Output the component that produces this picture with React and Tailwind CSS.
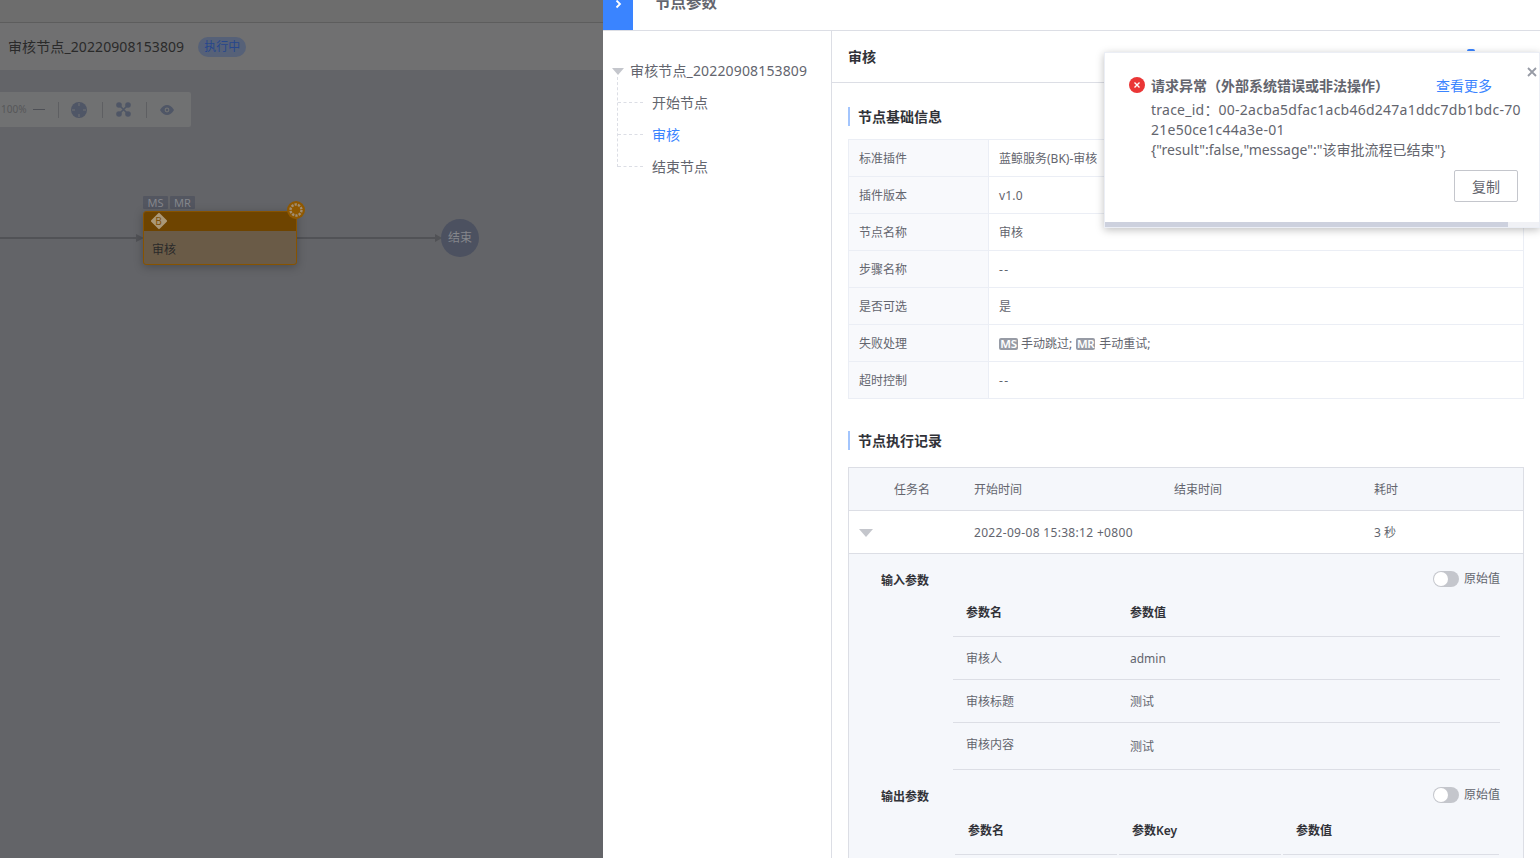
const font = { fontFamily: '"Noto Sans","Noto Sans CJK SC",sans-serif' };

function Section({ children }) {
  return (
    <div className="h-[19px] border-l-2 border-[#a3c5fd] pl-2 text-[14px] leading-[19px] font-semibold text-[#313238]">{children}</div>
  );
}

function InfoRow({ label, children }) {
  return (
    <div className="flex h-[37px] last:h-[36px] border-b border-[#ebeef5] last:border-b-0 items-center text-[12px] text-[#63656e]">
      <div className="w-[140px] h-full shrink-0 bg-[#f8f9fc] border-r border-[#ebeef5] pl-[10px] pt-[2px] flex items-center">{label}</div>
      <div className="pl-[10px] pt-[2px] flex items-center gap-[3px]">{children}</div>
    </div>
  );
}

function Tag({ children, className = "" }) {
  return <span className={`inline-flex items-center justify-center h-[12px] w-[19px] rounded-[2px] bg-[#979ba5] text-white text-[11.500px] font-semibold tracking-[-0.3px] leading-none ${className}`}>{children}</span>;
}

function Toggle() {
  return (
    <div className="flex items-center gap-[5px] text-[12px] text-[#63656e]">
      <div className="w-[26px] h-[16px] rounded-full bg-[#c4c6cc] p-[1px]">
        <div className="w-[14px] h-[14px] rounded-full bg-white" />
      </div>
      <span>原始值</span>
    </div>
  );
}

function ParamRow({ a, b, h, ca = "pt-[2px]", cb = "pt-[2px]" }) {
  return (
    <div className={`flex items-center border-b border-[#dcdee5] text-[12px] text-[#63656e] ${h}`}>
      <div className={`w-[177px] pl-[13px] shrink-0 ${ca}`}>{a}</div>
      <div className={cb}>{b}</div>
    </div>
  );
}

function Canvas() {
  return (
    <div className="relative flex-1 bg-[#636468] overflow-hidden">
      <div className="absolute left-0 top-[22px] w-[191px] h-[35px] bg-[#707172] rounded-r-[2px] flex items-center text-[#54565c]">
        <span className="absolute left-[1px] text-[10px] text-[#565759]">100%</span>
        <div className="absolute left-[33px] w-[12px] h-[1px] bg-[#4e5056]" />
        <div className="absolute left-[58px] w-px h-[16px] bg-[#5e5f62]" />
        <svg className="absolute left-[71px]" width="16" height="16" viewBox="0 0 16 16">
          <circle cx="8" cy="8" r="8" fill="#4f5666" />
          <path d="M8 1v3M8 12v3M1 8h3M12 8h3" stroke="#707172" strokeWidth="1" />
        </svg>
        <div className="absolute left-[102px] w-px h-[16px] bg-[#5e5f62]" />
        <svg className="absolute left-[116px]" width="15" height="15" viewBox="0 0 15 15">
          <g fill="#4f5666">
            <circle cx="3" cy="3" r="2.8" /><circle cx="12" cy="3" r="2.8" />
            <circle cx="3" cy="12" r="2.8" /><circle cx="12" cy="12" r="2.8" />
          </g>
          <path d="M3 3l9 9M12 3l-9 9" stroke="#4f5666" strokeWidth="1.6" />
        </svg>
        <div className="absolute left-[146px] w-px h-[16px] bg-[#5e5f62]" />
        <svg className="absolute left-[160px]" width="14" height="10" viewBox="0 0 14 10">
          <path d="M0 5C2 1.5 4.5 0 7 0s5 1.500 7 5c-2 3.500-4.500 5-7 5S2 8.500 0 5z" fill="#4f5666" />
          <circle cx="7" cy="5" r="2.400" fill="#707172" />
          <circle cx="7" cy="5" r="1.200" fill="#4f5666" />
        </svg>
      </div>

      <div className="absolute left-0 top-[167px] w-[138px] h-[2px] bg-[#515256]" />
      <div className="absolute left-[136px] top-[164px] w-0 h-0 border-y-[4px] border-y-transparent border-l-[8px] border-l-[#515256]" />
      <div className="absolute left-[297px] top-[167px] w-[140px] h-[2px] bg-[#515256]" />
      <div className="absolute left-[435px] top-[164px] w-0 h-0 border-y-[4px] border-y-transparent border-l-[7px] border-l-[#515256]" />

      <div className="absolute left-[143px] top-[126px] flex gap-[2px]">
        <div className="w-[25px] h-[13px] rounded-[1px] bg-[#535660] text-[#85878c] text-[11px] leading-[14px] text-center">MS</div>
        <div className="w-[25px] h-[13px] rounded-[1px] bg-[#535660] text-[#85878c] text-[11px] leading-[14px] text-center">MR</div>
      </div>

      <div className="absolute left-[143px] top-[141px] w-[154px] h-[54px] rounded-[3px] border border-[#875300] bg-[#6a5b47] shadow-[0_2px_10px_rgba(0,0,0,0.25)] overflow-hidden">
        <div className="h-[20px] bg-[#6e4400] -mx-px -mt-px relative">
          <div className="absolute left-[7px] top-[1px] w-[17px] h-[17px] flex items-center justify-center">
            <div className="absolute w-[12px] h-[12px] rotate-45 rounded-[1px] bg-[#ab9877]" />
            <span className="relative text-[10px] leading-none text-[#7d5008]">B</span>
          </div>
        </div>
        <div className="pl-[8px] pt-[10px] text-[12px] leading-[18px] text-[#2a2a2a]">审核</div>
      </div>

      <svg className="absolute left-[287px] top-[131px]" width="18" height="18" viewBox="0 0 18 18">
        <circle cx="9" cy="9" r="9" fill="#8f5800" />
        <circle cx="9" cy="9" r="5.500" fill="none" stroke="#a08d72" strokeWidth="2.400" strokeDasharray="2.300 1.100" />
      </svg>

      <div className="absolute left-[441px] top-[149px] w-[38px] h-[38px] rounded-full bg-[#4c5160] text-[#85878c] text-[12px] flex items-center justify-center">结束</div>
    </div>
  );
}

export default function App() {
  return (
    <div className="relative flex w-[1540px] h-[858px] overflow-hidden bg-white" style={font}>
      <div className="w-[603px] shrink-0 flex flex-col h-full">
        <div className="h-[23px] bg-[#6d6d6d] border-b border-[#5d5d5d]" />
        <div className="h-[47px] bg-[#707071] flex items-center pl-[8px] gap-[14px]">
          <span className="text-[14px] text-[#2a2a2a] tracking-[0.1px]">审核节点_20220908153809</span>
          <span className="h-[20px] w-[48px] rounded-full bg-[#566178] text-[#26478c] text-[12px] flex items-center justify-center">执行中</span>
        </div>
        <Canvas />
      </div>

      <div className="flex-1 flex flex-col h-full min-w-0">
        <div className="h-[31px] shrink-0 border-b border-[#dcdee5] flex items-start overflow-hidden">
          <div className="w-[30px] h-[30px] bg-[#3a84ff] shrink-0 flex justify-center">
            <svg width="10" height="10" viewBox="0 0 10 10"><path d="M3.500 0.500L7 4 3.500 7.500" fill="none" stroke="#fff" strokeWidth="1.800" /></svg>
          </div>
          <div className="ml-[22px] -mt-[10px] text-[15.500px] leading-[24px] font-semibold text-[#63656e]">节点参数</div>
        </div>

        <div className="flex flex-1 min-h-0">
          <div className="w-[229px] shrink-0 border-r border-[#dcdee5] pt-[23px] text-[14px] relative">
            <div className="flex items-center h-[32px] pl-[9px]">
              <div className="w-0 h-0 border-x-[6px] border-x-transparent border-t-[7px] border-t-[#c4c6cc] mr-[6px] mt-[2px]" />
              <span className="text-[#63656e] tracking-[0.15px]">审核节点_20220908153809</span>
            </div>
            <div className="ml-[14px] w-[1px] border-l border-dashed border-[#dcdee5] h-[90px] absolute top-[46px]" />
            {[
              ["开始节点", "text-[#63656e]"],
              ["审核", "text-[#3a84ff]"],
              ["结束节点", "text-[#63656e]"],
            ].map(([t, c]) => (
              <div key={t} className="flex items-center h-[32px] pl-[15px]">
                <div className="w-[25px] border-t border-dashed border-[#dcdee5] mr-[9px]" />
                <span className={c}>{t}</span>
              </div>
            ))}
          </div>

          <div className="flex-1 min-w-0 overflow-hidden">
            <div className="h-[52px] border-b border-[#dcdee5] pl-[16px] flex items-center text-[14px] font-semibold text-[#313238] relative">
              审核
              <div className="absolute left-[635px] top-[18px] w-[8px] h-[2px] rounded-t-full bg-[#3a84ff]" />
            </div>
            <div className="pl-[16px] pr-[16px] pt-[24px]">
              <Section>节点基础信息</Section>
              <div className="mt-[13px] border border-[#ebeef5]">
                <InfoRow label="标准插件">蓝鲸服务(BK)-审核</InfoRow>
                <InfoRow label="插件版本"><span className="tracking-[0.2px]">v1.0</span></InfoRow>
                <InfoRow label="节点名称">审核</InfoRow>
                <InfoRow label="步骤名称"><span className="tracking-[1.500px]">--</span></InfoRow>
                <InfoRow label="是否可选">是</InfoRow>
                <InfoRow label="失败处理">
                  <Tag>MS</Tag><span>手动跳过;</span><Tag className="ml-px mr-px">MR</Tag><span>手动重试;</span>
                </InfoRow>
                <InfoRow label="超时控制"><span className="tracking-[1.500px]">--</span></InfoRow>
              </div>

              <div className="mt-[32px]"><Section>节点执行记录</Section></div>

              <div className="mt-[17px] border border-[#dcdee5] border-b-0 h-[500px]">
                <div className="flex items-center h-[43px] bg-[#f5f7fb] border-b border-[#dcdee5] text-[12px] text-[#63656e] pt-[2px]">
                  <div className="w-[125px] pl-[45px]">任务名</div>
                  <div className="w-[200px]">开始时间</div>
                  <div className="w-[200px]">结束时间</div>
                  <div>耗时</div>
                </div>
                <div className="flex items-center h-[43px] border-b border-[#dcdee5] text-[12px] text-[#63656e] pt-[2px]">
                  <div className="w-[125px] pl-[10px]">
                    <div className="w-0 h-0 border-x-[7px] border-x-transparent border-t-[8px] border-t-[#c4c6cc]" />
                  </div>
                  <div className="w-[400px] tracking-[0.32px]">2022-09-08 15:38:12 +0800</div>
                  <div>3 秒</div>
                </div>
                <div className="bg-[#f5f7fb] h-[420px] pl-[32px] pr-[23px] pt-[16px]">
                  <div className="flex justify-between items-start h-[21px]">
                    <span className="text-[12px] font-semibold text-[#313238] leading-[22px]">输入参数</span>
                    <Toggle />
                  </div>
                  <div className="ml-[72px]">
                    <div className="flex items-center h-[46px] border-b border-[#dcdee5] text-[12px] font-semibold text-[#313238]">
                      <div className="w-[177px] pl-[13px] shrink-0 -mt-[2px]">参数名</div>
                      <div className="-mt-[2px]">参数值</div>
                    </div>
                    <ParamRow a="审核人" b="admin" h="h-[43px]" />
                    <ParamRow a="审核标题" b="测试" h="h-[43px]" />
                    <ParamRow a="审核内容" b="测试" h="h-[47px]" ca="-mt-[2px]" cb="pt-[2px]" />
                  </div>
                  <div className="flex justify-between items-start h-[21px] mt-[16px]">
                    <span className="text-[12px] font-semibold text-[#313238] leading-[22px]">输出参数</span>
                    <Toggle />
                  </div>
                  <div className="ml-[74px] flex gap-[2px] text-[12px] font-semibold text-[#313238]">
                    {[
                      ["参数名", "w-[162px]"],
                      ["参数Key", "w-[162px]"],
                      ["参数值", "w-[216px]"],
                    ].map(([t, w]) => (
                      <div key={t} className={`${w} h-[48px] border-b border-[#dcdee5] pl-[13px] flex items-center`}>{t}</div>
                    ))}
                  </div>
                </div>
              </div>
            </div>
          </div>
        </div>
      </div>

      <div className="absolute left-[1104px] top-[52px] w-[436px] h-[176px] bg-white border border-[#ebeef5] shadow-[0_2px_8px_rgba(0,0,0,0.25)] flex flex-col">
        <div className="flex-1 relative pl-[24px] pt-[21px]">
          <div className="flex items-center h-[22px]">
            <svg width="16" height="16" viewBox="0 0 16 16" className="mr-[6px]">
              <circle cx="8" cy="8" r="8" fill="#ea3636" />
              <path d="M5.500 5.500l5 5M10.500 5.500l-5 5" stroke="#fff" strokeWidth="1.400" />
            </svg>
            <span className="text-[14px] font-semibold text-[#63656e] w-[285px]">请求异常（外部系统错误或非法操作）</span>
            <span className="text-[14px] text-[#3a84ff]">查看更多</span>
          </div>
          <div className="pl-[22px] text-[14px] leading-[20px] text-[#63656e] mt-[4px] whitespace-nowrap tracking-[0.24px]">
            <div>trace_id：00-2acba5dfac1acb46d247a1ddc7db1bdc-70</div>
            <div>21e50ce1c44a3e-01</div>
            <div className="tracking-normal">{'{"result":false,"message":"该审批流程已结束"}'}</div>
          </div>
          <div className="absolute left-[422px] top-[14px] text-[#979ba5]">
            <svg width="10" height="10" viewBox="0 0 10 10"><path d="M1 1l8 8M9 1L1 9" stroke="currentColor" strokeWidth="1.800" /></svg>
          </div>
          <div className="absolute right-[21px] top-[117px] w-[64px] h-[32px] border border-[#c4c6cc] rounded-[2px] text-[14px] text-[#63656e] flex items-center justify-center">复制</div>
        </div>
        <div className="h-[5px] bg-[#f0f1f5]"><div className="h-full w-[403px] bg-[#cdd1de]" /></div>
      </div>
    </div>
  );
}
